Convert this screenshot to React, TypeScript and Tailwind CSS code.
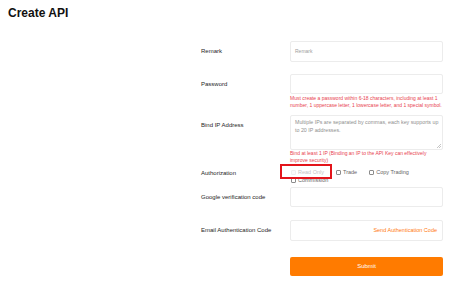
import React from 'react';

const Label: React.FC<{ text: string }> = ({ text }) => (
  <div className="w-[89px] h-[20px] flex items-center text-[6px] text-[#262626] shrink-0">{text}</div>
);

const Box: React.FC<{ className?: string; children?: React.ReactNode }> = ({ className = '', children }) => (
  <div className={`w-[153px] border border-[#ececec] rounded-[2px] bg-white ${className}`}>{children}</div>
);

const Check: React.FC<{ label: string; disabled?: boolean }> = ({ label, disabled }) => (
  <div className="flex items-center gap-[2px] h-[8px]">
    <span
      className={`w-[5px] h-[5px] border rounded-[1px] ${disabled ? 'border-[#eeeeee] bg-[#fafafa]' : 'border-[#8c8c8c]'}`}
    />
    <span className={`text-[5.5px] leading-[8px] ${disabled ? 'text-[#c4c4c4]' : 'text-[#666666]'}`}>{label}</span>
  </div>
);

export default function App() {
  return (
    <div className="w-[474px] h-[291px] bg-white overflow-hidden font-['Liberation_Sans',Arial,sans-serif]">
      <h1 className="pl-2 pt-[5px] text-[12px] font-bold leading-[16px] text-[#111111]">Create API</h1>

      <div className="pl-[201px] mt-[20px] flex flex-col">
        {/* Remark */}
        <div className="flex">
          <Label text="Remark" />
          <Box className="h-[21px] flex items-center px-[4px]">
            <span className="text-[5px] text-[#9e9e9e]">Remark</span>
          </Box>
        </div>

        {/* Password */}
        <div className="flex mt-[12px]">
          <Label text="Password" />
          <div className="w-[153px]">
            <Box className="h-[20px]" />
            <p className="mt-[1px] text-[5px] leading-[7px] text-[#e8434f] whitespace-nowrap">
              <span className="block">Must create a password within 6-18 characters, including at least 1</span>
              <span className="block">number, 1 uppercase letter, 1 lowercase letter, and 1 special symbol.</span>
            </p>
          </div>
        </div>

        {/* Bind IP */}
        <div className="flex mt-[6px]">
          <Label text="Bind IP Address" />
          <div className="w-[153px]">
            <Box className="h-[35px] relative px-[4px] pt-[2px]">
              <p className="text-[5.3px] leading-[8px] text-[#8f8f8f] whitespace-nowrap">
                <span className="block">Multiple IPs are separated by commas, each key supports up</span>
                <span className="block">to 20 IP addresses.</span>
              </p>
              <svg className="absolute right-[1px] bottom-[1px]" width="5" height="5" viewBox="0 0 5 5">
                <path d="M1 5 L5 1 M3 5 L5 3" stroke="#a0a0a0" strokeWidth="0.6" />
              </svg>
            </Box>
            <p className="text-[5px] leading-[6.5px] text-[#e8434f] whitespace-nowrap">
              <span className="block">Bind at least 1 IP (Binding an IP to the API Key can effectively</span>
              <span className="block">improve security)</span>
            </p>
          </div>
        </div>

        {/* Authorization */}
        <div className="flex mt-[1px]">
          <div className="w-[89px] pt-[4px] shrink-0">
            <div className="h-[10px] flex items-center text-[6px] text-[#262626]">Authorization</div>
          </div>
          <div className="w-[153px] relative pt-[4px] pl-[1px]">
            <div className="flex flex-wrap gap-x-[12px]">
              <Check label="Read Only" disabled />
              <Check label="Trade" />
              <Check label="Copy Trading" />
              <Check label="Commission" />
            </div>
            <div className="absolute left-[-10px] top-0 w-[52px] h-[15px] border-2 border-[#e3141b]" />
          </div>
        </div>

        {/* Google */}
        <div className="flex mt-[3px]">
          <Label text="Google verification code" />
          <Box className="h-[20px]" />
        </div>

        {/* Email */}
        <div className="flex mt-[13px]">
          <Label text="Email Authentication Code" />
          <Box className="h-[21px] flex items-center justify-end px-[5px]">
            <span className="text-[5.5px] text-[#ff7a0f]">Send Authentication Code</span>
          </Box>
        </div>

        {/* Submit */}
        <div className="flex mt-[16px]">
          <div className="w-[89px] shrink-0" />
          <button className="w-[153px] h-[19px] rounded-[2px] bg-[#ff7b00] text-white text-[6px] flex items-center justify-center">
            Submit
          </button>
        </div>
      </div>
    </div>
  );
}
